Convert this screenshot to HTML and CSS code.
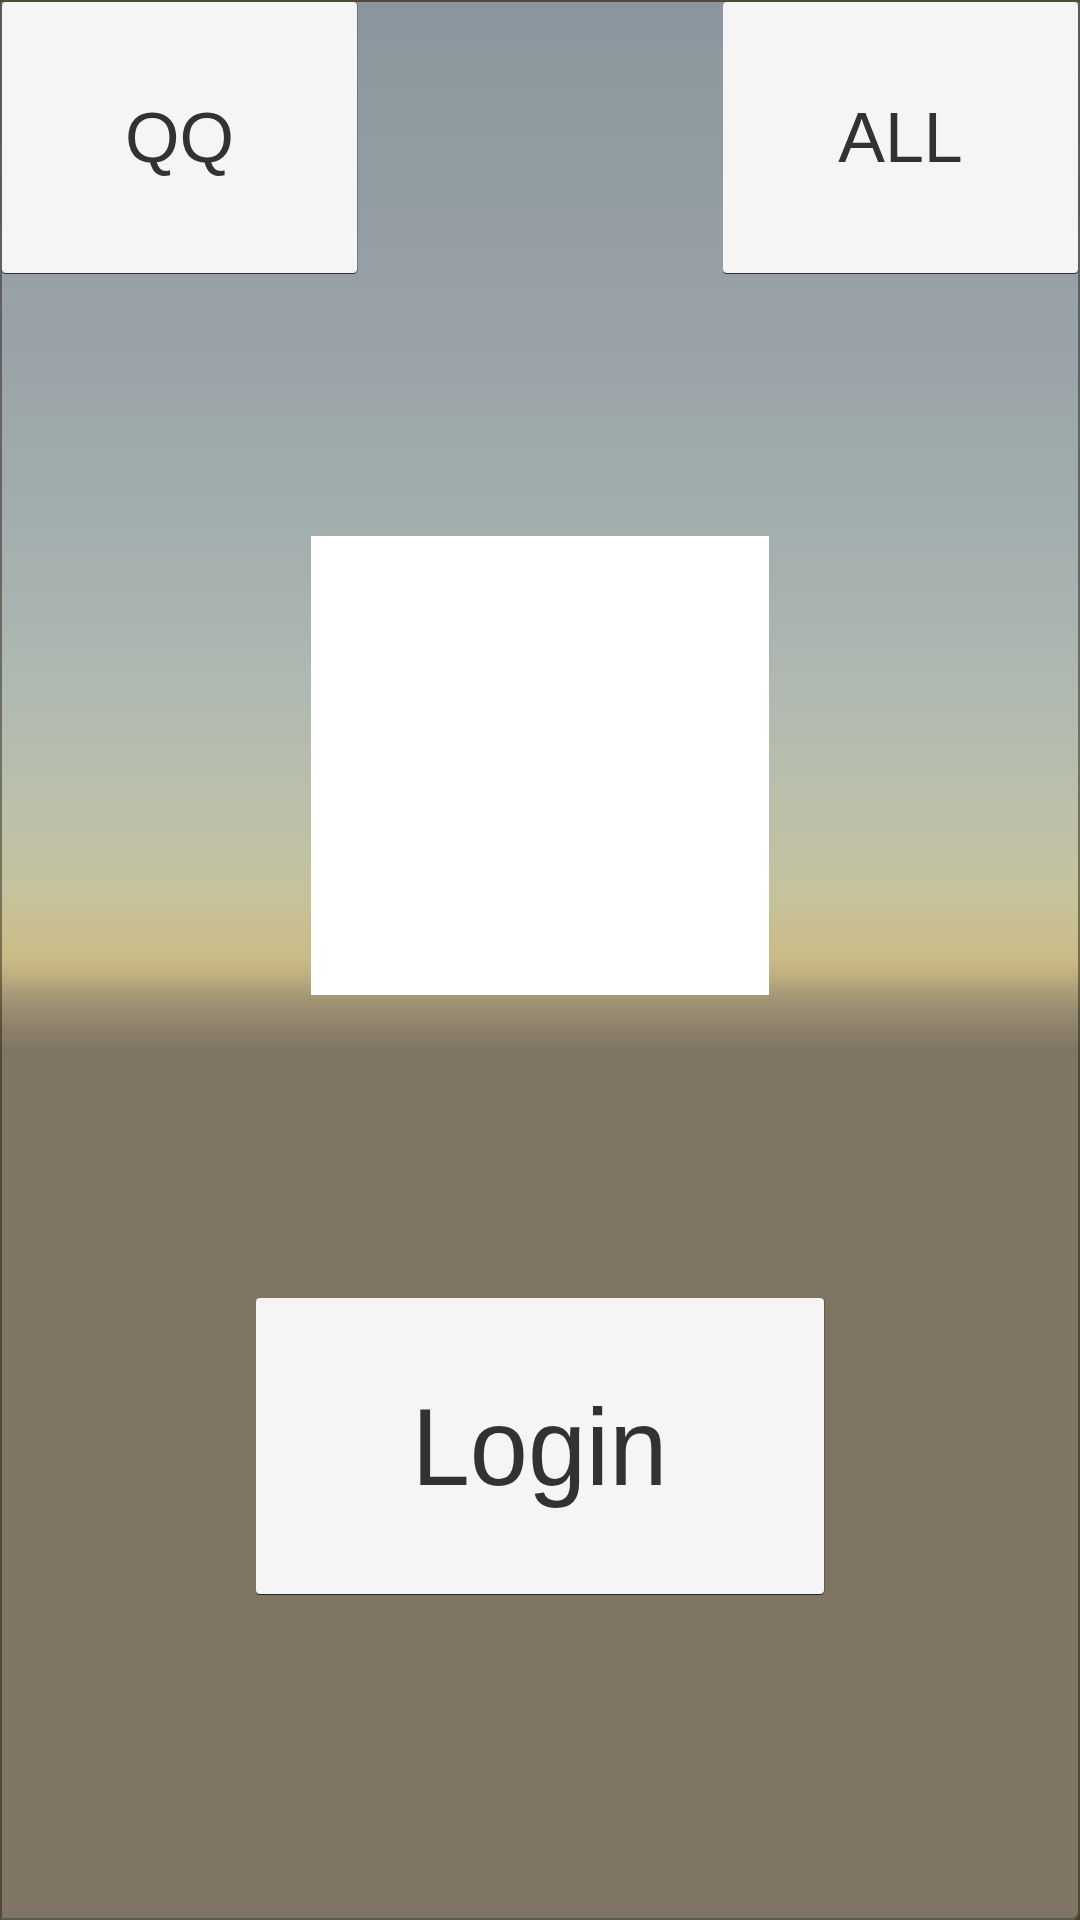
FILE: index.html
```html
<!DOCTYPE html>
<html>
<head>
<meta charset="utf-8">
<link rel="stylesheet" href="styles.css">
</head>
<body>
<div class="screen">
  <div class="top-row">
    <div class="btn btn-top">QQ</div>
    <div class="btn btn-top">ALL</div>
  </div>
  <div class="image-box"></div>
  <div class="btn btn-login"><span class="login-label">Login</span></div>
</div>
</body>
</html>
```
FILE: styles.css
```css
html, body {
  margin: 0;
  padding: 0;
  background: #4a3c22;
}
.screen {
  box-sizing: border-box;
  width: 1080px;
  height: 1920px;
  border: 2px solid rgba(25, 20, 5, 0.45);
  border-radius: 2px 2px 8px 2px;
  display: flex;
  flex-direction: column;
  align-items: center;
  overflow: hidden;
  background: linear-gradient(to bottom,
    #8a959d 0px,
    #959fa5 260px,
    #a3aeae 537px,
    #b1bab1 700px,
    #bcc0a9 810px,
    #c5c39d 890px,
    #cbbb86 955px,
    #c2b283 970px,
    #ab9e7a 988px,
    #998c71 1008px,
    #8a7e69 1030px,
    #807565 1050px,
    #807565 1920px);
  font-family: "Liberation Sans", Arial, sans-serif;
}
.top-row {
  align-self: stretch;
  display: flex;
  justify-content: space-between;
}
.btn {
  box-sizing: border-box;
  background: #f5f5f5;
  color: #323232;
  border-radius: 4px;
  box-shadow: 0 1px 0 rgba(20, 20, 20, 0.8), 1px 0 0 rgba(20, 20, 20, 0.25);
  display: flex;
  align-items: center;
  justify-content: center;
}
.btn-top {
  width: 355px;
  height: 271px;
  font-size: 70px;
}
.image-box {
  margin-top: 263px;
  width: 458px;
  height: 459px;
  background: #ffffff;
}
.btn-login {
  margin-top: 303px;
  width: 568px;
  height: 296px;
  font-size: 110px;
}
.login-label {
  display: inline-block;
  transform: scaleX(0.95);
}
```
